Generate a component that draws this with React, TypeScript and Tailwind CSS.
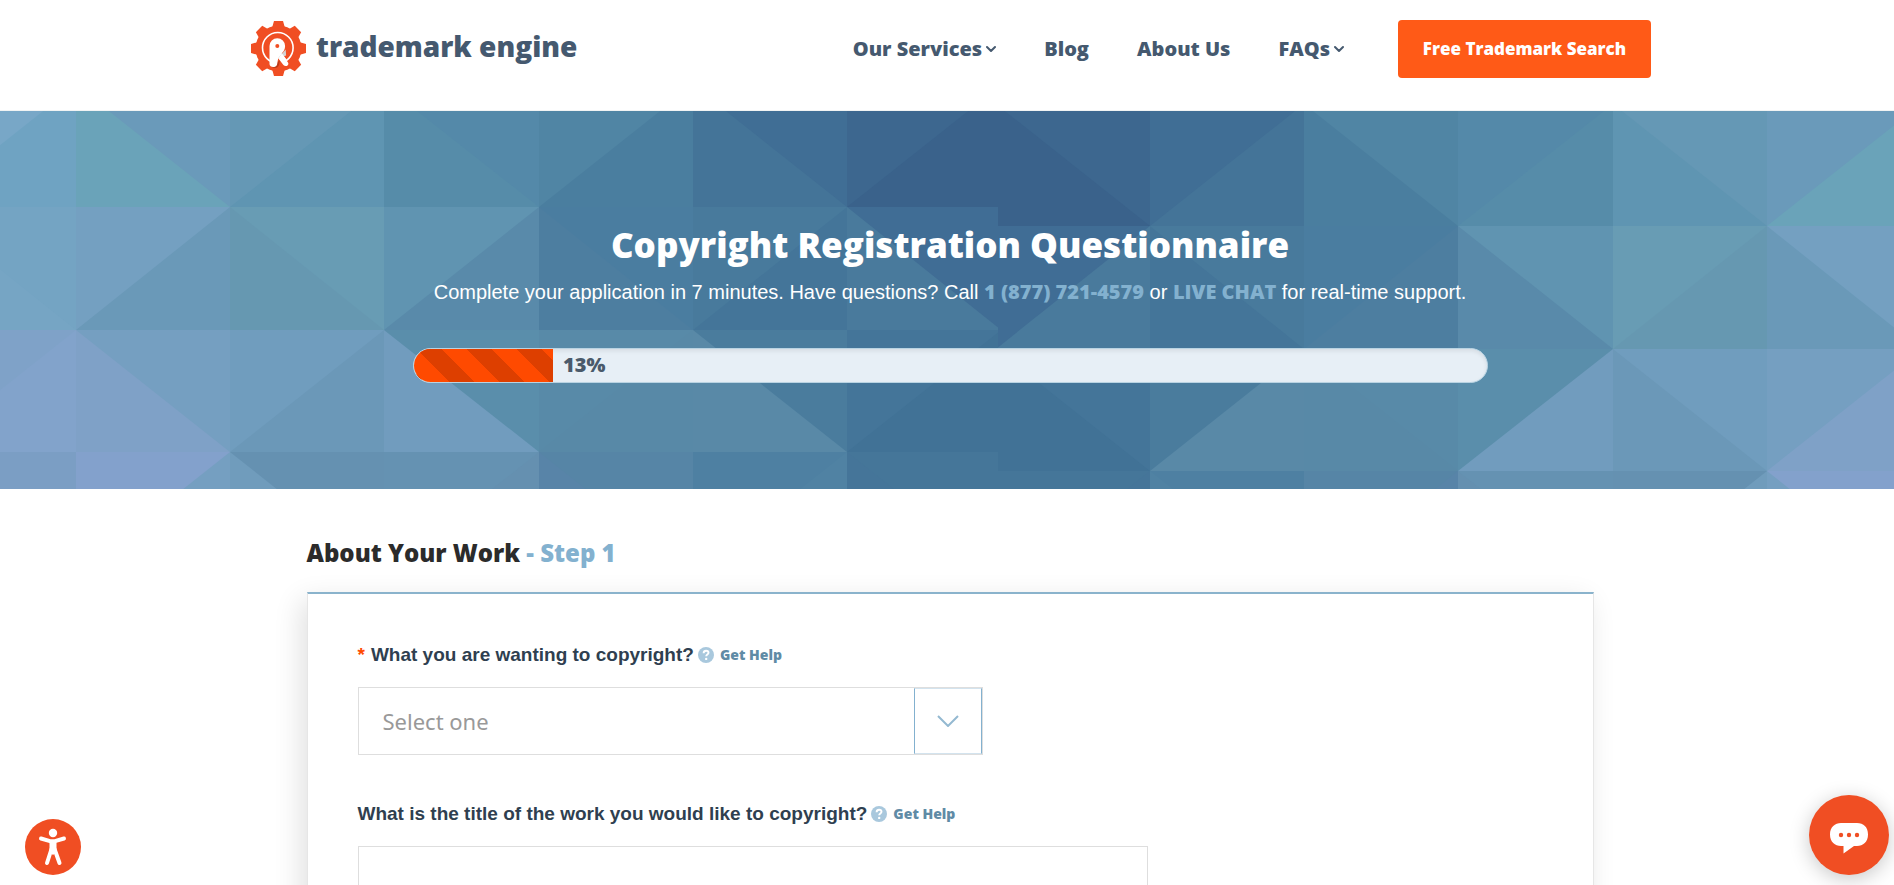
import { useState } from 'react';
import type { ReactNode } from 'react';

type Cell = {
  dir: '/' | '\\';
  left: string;
  right: string;
};

const COLS = [-78, 76, 230, 384, 539, 693, 847, 1001];
const ROWS = [-26, 96, 219, 341, 463];

const c = (dir: '/' | '\\', left: string, right: string): Cell => ({ dir, left, right });

// each cell is split by its diagonal into a left and a right triangle
const CELLS: Cell[][] = [
  [
    c('/', '#78a7c7', '#6fa3c2'),
    c('\\', '#6aa3b9', '#6a9aba'),
    c('/', '#6598b5', '#5f95b2'),
    c('\\', '#568ca9', '#5489a9'),
    c('/', '#5085a4', '#4a7e9f'),
    c('\\', '#447498', '#406e95'),
    c('/', '#3d678f', '#3a628b'),
  ],
  [
    c('\\', '#76a5c4', '#74a4c3'),
    c('/', '#74a0c1', '#6a99b8'),
    c('\\', '#6698b1', '#689cb4'),
    c('/', '#6094b1', '#598aaa'),
    c('\\', '#4d7ea0', '#4a7da0'),
    c('/', '#487a9c', '#447599'),
    c('\\', '#497a9c', '#406d95'),
  ],
  [
    c('/', '#7fa2c8', '#82a3cb'),
    c('\\', '#7fa1c7', '#759fc1'),
    c('/', '#709dbe', '#6b98b8'),
    c('\\', '#719cbe', '#5a8eab'),
    c('/', '#588aa8', '#5889a7'),
    c('\\', '#5989a7', '#4a7c9d'),
    c('/', '#447599', '#417296'),
  ],
  [
    c('\\', '#7b9ec4', '#7b9ec4'),
    c('/', '#83a1cc', '#759fc1'),
    c('\\', '#709cbc', '#6591b1'),
    c('/', '#6592b2', '#6590b0'),
    c('\\', '#5884a8', '#5685a6'),
    c('/', '#4e80a2', '#5082a3'),
    c('\\', '#457599', '#457699'),
  ],
];

function Triangles() {
  return (
    <>
      {CELLS.map((row, r) =>
        row.map((cell, i) => {
          const x1 = COLS[i];
          const x2 = COLS[i + 1];
          const y1 = ROWS[r];
          const y2 = ROWS[r + 1];
          const points =
            cell.dir === '/'
              ? `${x1},${y1} ${x2},${y1} ${x1},${y2}`
              : `${x1},${y1} ${x2},${y2} ${x1},${y2}`;
          return (
            <g key={`${r}-${i}`}>
              <rect x={x1} y={y1} width={x2 - x1} height={y2 - y1} fill={cell.right} />
              <polygon points={points} fill={cell.left} />
            </g>
          );
        })
      )}
    </>
  );
}

function HeroPattern() {
  return (
    <svg
      className="absolute inset-0 h-full w-full"
      viewBox="0 0 1894 378"
      preserveAspectRatio="xMidYMin slice"
      aria-hidden="true"
    >
      <defs>
        <clipPath id="left-half">
          <rect x="-80" y="0" width="1078" height="378" />
        </clipPath>
        <clipPath id="right-half">
          <rect x="998" y="0" width="1078" height="378" />
        </clipPath>
      </defs>
      <g clipPath="url(#left-half)">
        <Triangles />
      </g>
      <g clipPath="url(#right-half)">
        <g transform="translate(1997 19) scale(-1 1)">
          <Triangles />
        </g>
      </g>
    </svg>
  );
}

function GearLogo() {
  return (
    <svg className="h-[55px] w-[55px]" viewBox="0 0 55 55" aria-hidden="true">
      <g fill="#f04e23">
        <circle cx="27.5" cy="27.5" r="23" />
        {[0, 45, 90, 135, 180, 225, 270, 315].map((a) => (
          <path key={a} d="M23 0h9l2 7h-13z" transform={`rotate(${a} 27.5 27.5)`} />
        ))}
      </g>
      <circle cx="26.8" cy="26.8" r="15.3" fill="none" stroke="#fff" strokeWidth="1.6" />
      <path d="M20 41h18l-2 5-13 2z" fill="#f04e23" />
      <path d="M21 46c3 2 6 1 7-2l1-5z" fill="#bd3c1a" />
      <path
        d="M18.500 25a7.800 7.800 0 0 1 15.600 0c0 3-1.500 5.800-3.400 7.200l6.300 9.200c1.700 3-2.600 5-4.600 2.600l-5.200-6.800-1.200 6.500c-1 3.300-7.500 3.300-7.500-.6z"
        fill="#fff"
      />
      <path d="M27.200 37l3.500-4 4-4.500.4 6-3 1z" fill="#d3d3d3" />
      <path d="M28 36.500l3-4 4.500 6-2 2z" fill="#fff" />
      <circle cx="26.300" cy="25" r="2" fill="#f04e23" />
    </svg>
  );
}

function SmallChevron() {
  return (
    <svg className="h-[10px] w-[10px]" viewBox="0 0 10 10" fill="none" aria-hidden="true">
      <path d="M1 3l4 4 4-4" stroke="#45596f" strokeWidth="2" strokeLinecap="round" strokeLinejoin="round" />
    </svg>
  );
}

function NavLink({ children, menu }: { children: ReactNode; menu?: boolean }) {
  return (
    <a href="#" className="flex items-center gap-1 text-[20px] leading-6">
      {children}
      {menu && <SmallChevron />}
    </a>
  );
}

function Header() {
  return (
    <header className="h-[111px] border-b border-[#f1f3f3] bg-white pl-2">
      <div className="mx-auto flex max-w-[1400px] items-start justify-between pt-5">
        <a href="#" className="flex h-[56px] items-center gap-[10px]">
          <GearLogo />
          <span className="pb-1 text-[28px] leading-9">trademark engine</span>
        </a>
        <div className="flex items-center gap-[54px]">
          <nav className="flex items-center gap-12">
            <NavLink menu>Our Services</NavLink>
            <NavLink>Blog</NavLink>
            <NavLink>About Us</NavLink>
            <NavLink menu>FAQs</NavLink>
          </nav>
          <button className="h-[58px] w-[253px] rounded bg-[#ff5a17] text-[17px] text-white">
            Free Trademark Search
          </button>
        </div>
      </div>
    </header>
  );
}

function Hero({ progress }: { progress: number }) {
  return (
    <section className="relative h-[378px] overflow-hidden pl-[6px]">
      <HeroPattern />
      <div className="relative mx-auto max-w-[1075px] pt-[110px] text-center text-white">
        <h1 className="text-[35px] leading-[48px]">Copyright Registration Questionnaire</h1>
        <p className="mt-[7px] font-['Liberation_Sans',Arial,sans-serif] text-[20px] leading-8 font-normal">
          Complete your application in 7 minutes. Have questions? Call{' '}
          <a href="#" className="font-['Open_Sans',sans-serif] font-extrabold text-[#83b1cf]">
            1 (877) 721-4579
          </a>{' '}
          or{' '}
          <a href="#" className="font-['Open_Sans',sans-serif] font-extrabold text-[#83b1cf]">
            LIVE CHAT
          </a>{' '}
          for real-time support.
        </p>
        <div
          role="progressbar"
          aria-valuenow={progress}
          aria-valuemin={0}
          aria-valuemax={100}
          className="mt-10 flex h-[35px] overflow-hidden rounded-full border border-[#b9d3e2] bg-[#e7eff6] shadow-[inset_0_2px_4px_rgba(0,0,0,0.08)]"
        >
          <div
            className="bg-[#ff4a00] bg-[linear-gradient(45deg,#dd3f00_25%,transparent_25%,transparent_50%,#dd3f00_50%,#dd3f00_75%,transparent_75%)] bg-[length:50px_50px] bg-[position:3px_0]"
            style={{ width: `${progress}%` }}
          />
          <span className="pl-[10px] text-[20px] leading-8 text-[#4a5a6b]">{progress}%</span>
        </div>
      </div>
    </section>
  );
}

function GetHelp() {
  return (
    <button type="button" className="flex items-center gap-[6px] text-[14px] leading-6 text-[#5f8ba6]">
      <svg className="h-4 w-4" viewBox="0 0 16 16" aria-hidden="true">
        <circle cx="8" cy="8" r="8" fill="#a9c8dd" />
        <path
          d="M5.600 6.200c.1-1.600 1.100-2.400 2.500-2.400s2.400.8 2.400 2c0 1.700-2.300 1.800-2.300 3.400"
          fill="none"
          stroke="#fff"
          strokeWidth="1.900"
        />
        <circle cx="8.200" cy="11.900" r="1.200" fill="#fff" />
      </svg>
      Get Help
    </button>
  );
}

function Question({ id, label, required, children }: { id: string; label: string; required?: boolean; children: ReactNode }) {
  return (
    <div>
      <div className="mb-5 flex items-center gap-1">
        <label
          htmlFor={id}
          className="font-['Liberation_Sans',Arial,sans-serif] text-[19px] leading-6 font-bold text-[#2f3f50]"
        >
          {required && <span className="mr-[6px] text-[#ff4a00]">*</span>}
          {label}
        </label>
        <GetHelp />
      </div>
      {children}
    </div>
  );
}

export default function App() {
  const [work, setWork] = useState('');
  const [title, setTitle] = useState('');

  return (
    <div className="h-screen overflow-hidden bg-white font-['Open_Sans',sans-serif] font-extrabold text-[#45596f]">
      <Header />
      <Hero progress={13} />

      <main className="pl-[6px]">
        <div className="mx-auto max-w-[1287px] pt-12">
          <h2 className="text-[24px] leading-8 text-[#2b2b2b]">
            About Your Work <span className="text-[#83b1cf]">- Step 1</span>
          </h2>
          <form className="mt-[23px] space-y-[47px] border border-t-2 border-[#e6e6e6] border-t-[#8ab3cc] px-[50px] pt-[49px] pb-16 shadow-[-6px_8px_26px_rgba(0,0,0,0.12)]">
            <Question id="work" label="What you are wanting to copyright?" required>
              <div className="relative h-[68px] max-w-[625px]">
                <select
                  id="work"
                  value={work}
                  onChange={(e) => setWork(e.target.value)}
                  className="h-full w-full appearance-none border border-[#dedede] bg-white pl-6 font-['Noto_Sans',sans-serif] text-[22px] font-normal text-[#999999]"
                >
                  <option value="">Select one</option>
                </select>
                <span className="pointer-events-none absolute inset-y-px right-px flex w-[68px] items-center justify-center border-x border-y border-x-[#83b1cf] border-y-[#d3e3ee]">
                  <svg className="h-3 w-[22px]" viewBox="0 0 22 12" fill="none" aria-hidden="true">
                    <path d="M1 1l10 10 10-10" stroke="#94b9d1" strokeWidth="2" />
                  </svg>
                </span>
              </div>
            </Question>
            <Question id="title" label="What is the title of the work you would like to copyright?">
              <input
                id="title"
                type="text"
                value={title}
                onChange={(e) => setTitle(e.target.value)}
                className="h-[68px] w-full max-w-[790px] border border-[#dedede] px-6 font-['Noto_Sans',sans-serif] text-[22px] font-normal"
              />
            </Question>
          </form>
        </div>
      </main>

      <button
        aria-label="Accessibility"
        className="fixed bottom-[10px] left-[25px] h-14 w-14 rounded-full bg-[#f04e23]"
      >
        <svg className="h-14 w-14" viewBox="0 0 56 56" fill="none" aria-hidden="true">
          <circle cx="28" cy="14" r="4.200" fill="#fff" />
          <path d="M16 19.500l9 2.700h5l9-2.700" stroke="#fff" strokeWidth="4" strokeLinecap="round" strokeLinejoin="round" />
          <path d="M26.500 30l-4.500 14M29.500 30l5 14" stroke="#fff" strokeWidth="4" strokeLinecap="round" />
          <path d="M24.500 21h7v12l-3.500 3-3.500-3z" fill="#fff" />
        </svg>
      </button>
      <button
        aria-label="Open chat"
        className="fixed right-[5px] bottom-[10px] h-20 w-20 rounded-full bg-[#f04e23] shadow-[0_4px_20px_rgba(0,0,0,0.22)]"
      >
        <svg className="h-20 w-20" viewBox="0 0 80 80" aria-hidden="true">
          <path
            d="M32 28h16c6.500 0 11 4 11 11.500S54 51 48 51h-3l-10.500 7.500V51H32c-6 0-11-4-11-11.500S26 28 32 28z"
            fill="#fff"
          />
          <circle cx="32" cy="40" r="2.200" fill="#f04e23" />
          <circle cx="40" cy="40" r="2.200" fill="#f04e23" />
          <circle cx="48" cy="40" r="2.200" fill="#f04e23" />
        </svg>
      </button>
    </div>
  );
}
